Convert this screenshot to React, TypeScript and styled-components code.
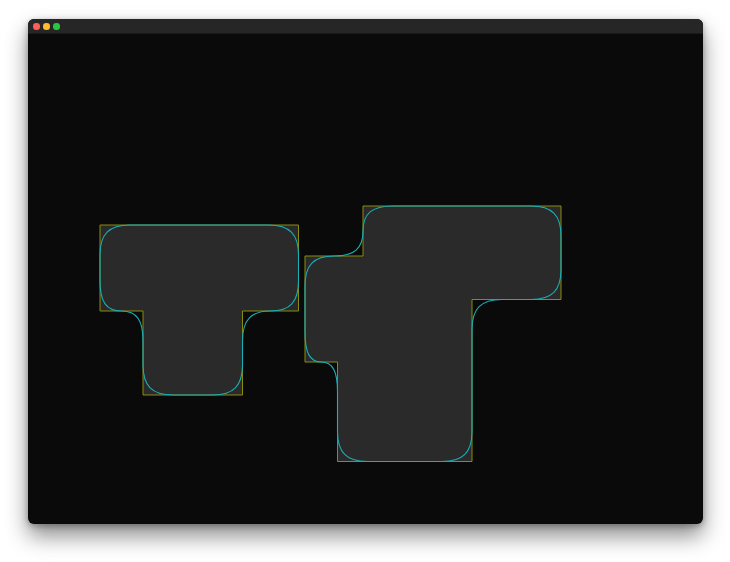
import React from 'react';
import styled, { createGlobalStyle } from 'styled-components';

const GlobalStyle = createGlobalStyle`
    html, body {
        margin: 0;
        padding: 0;
        background: #ffffff;
        font-family: "Inter", "Liberation Sans", sans-serif;
    }
`;

const Page = styled.div`
    width: 730px;
    height: 562px;
    padding: 19px 27px 0 28px;
    box-sizing: border-box;
`;

const Window = styled.div`
    width: 675px;
    height: 505px;
    display: flex;
    flex-direction: column;
    border-radius: 6px;
    overflow: hidden;
    background: #0a0a0a;
    box-shadow: 0 12px 22px rgba(0, 0, 0, 0.45), 0 2px 6px rgba(0, 0, 0, 0.3);
`;

const TitleBar = styled.div`
    height: 15px;
    flex: none;
    display: flex;
    align-items: center;
    gap: 3.5px;
    padding-left: 5px;
    padding-top: 1px;
    box-sizing: border-box;
    background: #262626;
    border-bottom: solid 1px #1a1a1a;
`;

const Light = styled.span<{ $color: string }>`
    width: 6.5px;
    height: 6.5px;
    border-radius: 50%;
    background: ${(p) => p.$color};
`;

const Canvas = styled.svg`
    flex: 1;
    display: block;
    width: 100%;
`;

type Pt = [number, number];

// outlines in canvas coordinates (page minus window content origin 28,34)
const shapes: Pt[][] = [
    [
        [72, 191],
        [270.5, 191],
        [270.5, 277],
        [214.5, 277],
        [214.5, 361],
        [115, 361],
        [115, 277],
        [72, 277],
    ],
    [
        [335, 172],
        [533, 172],
        [533, 265.5],
        [444, 265.5],
        [444, 427.5],
        [309.5, 427.5],
        [309.5, 328],
        [277, 328],
        [277, 222],
        [335, 222],
    ],
];

const RADIUS = 30;
const PULL = 0.3;

const polyPath = (pts: Pt[]) => 'M' + pts.map((p) => p.join(' ')).join(' L') + ' Z';

const smoothPath = (pts: Pt[]) => {
    const n = pts.length;
    let d = '';
    for (let i = 0; i < n; i++) {
        const prev = pts[(i - 1 + n) % n];
        const cur = pts[i];
        const next = pts[(i + 1) % n];
        const inLen = Math.hypot(cur[0] - prev[0], cur[1] - prev[1]);
        const outLen = Math.hypot(next[0] - cur[0], next[1] - cur[1]);
        const dirIn: Pt = [(cur[0] - prev[0]) / inLen, (cur[1] - prev[1]) / inLen];
        const dirOut: Pt = [(next[0] - cur[0]) / outLen, (next[1] - cur[1]) / outLen];
        const rIn = Math.min(RADIUS, inLen / 2);
        const rOut = Math.min(RADIUS, outLen / 2);
        const a: Pt = [cur[0] - dirIn[0] * rIn, cur[1] - dirIn[1] * rIn];
        const c1: Pt = [cur[0] - dirIn[0] * rIn * PULL, cur[1] - dirIn[1] * rIn * PULL];
        const c2: Pt = [cur[0] + dirOut[0] * rOut * PULL, cur[1] + dirOut[1] * rOut * PULL];
        const b: Pt = [cur[0] + dirOut[0] * rOut, cur[1] + dirOut[1] * rOut];
        d += `${i === 0 ? 'M' : 'L'}${a[0]} ${a[1]} C${c1[0]} ${c1[1]} ${c2[0]} ${c2[1]} ${b[0]} ${b[1]} `;
    }
    return d + 'Z';
};

export default function App() {
    return (
        <>
            <GlobalStyle />
            <Page>
                <Window>
                    <TitleBar>
                        <Light $color="#ff5f57" />
                        <Light $color="#febc2e" />
                        <Light $color="#28c840" />
                    </TitleBar>
                    <Canvas viewBox="0 0 675 490">
                        {shapes.map((pts, i) => (
                            <g key={i}>
                                <path d={polyPath(pts)} fill="#2a2a2a" stroke="#8a8a0c" strokeWidth={1} />
                                <path d={smoothPath(pts)} fill="none" stroke="#18aeb6" strokeWidth={1.1} />
                            </g>
                        ))}
                    </Canvas>
                </Window>
            </Page>
        </>
    );
}
